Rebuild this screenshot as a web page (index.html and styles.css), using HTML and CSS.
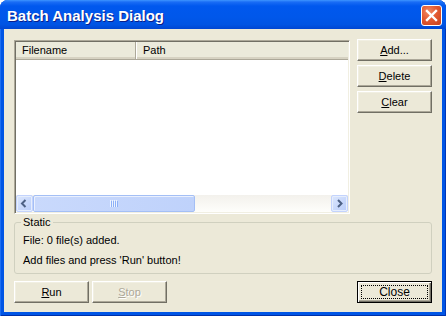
FILE: index.html
```html
<!DOCTYPE html>
<html lang="en">
<head>
  <meta charset="UTF-8" />
  <title>Batch Analysis Dialog</title>
  <link rel="stylesheet" href="styles.css">
</head>
<body>
  <div class="window">
    <div class="titlebar">
      <span class="title">Batch Analysis Dialog</span>
      <span class="close-x">
        <svg width="21" height="21" viewBox="0 0 21 21">
          <path d="M6 6 L15 15 M15 6 L6 15" stroke="#fff" stroke-width="2.4" stroke-linecap="square" />
        </svg>
      </span>
    </div>

    <div class="client">
      <div class="top-row">
        <div class="listview">
          <div class="lv-header">
            <div class="col col-name">Filename</div>
            <div class="col col-path">Path</div>
          </div>
          <div class="lv-body"></div>
          <div class="hscroll">
            <div class="sb-btn">
              <svg width="17" height="17" viewBox="0 0 17 17">
                <path d="M9.5 5 L6 8.5 L9.5 12" fill="none" stroke="#4d6185" stroke-width="2" />
              </svg>
            </div>
            <div class="sb-thumb">
              <svg width="8" height="7" viewBox="0 0 8 7">
                <path d="M0.5 0 V7 M2.5 0 V7 M4.5 0 V7 M6.5 0 V7" stroke="#eef4fe" stroke-width="1" />
                <path d="M1.5 1 V8 M3.5 1 V8 M5.5 1 V8 M7.5 1 V8" stroke="#8cb0f8" stroke-width="1" />
              </svg>
            </div>
            <div class="sb-track"></div>
            <div class="sb-btn">
              <svg width="17" height="17" viewBox="0 0 17 17">
                <path d="M7 5 L10.5 8.5 L7 12" fill="none" stroke="#4d6185" stroke-width="2" />
              </svg>
            </div>
          </div>
        </div>

        <div class="side-buttons">
          <div class="btn"><u>A</u>dd...</div>
          <div class="btn"><u>D</u>elete</div>
          <div class="btn"><u>C</u>lear</div>
        </div>
      </div>

      <fieldset class="group">
        <legend>Static</legend>
        <div class="line first">File: 0 file(s) added.</div>
        <div class="line">Add files and press 'Run' button!</div>
      </fieldset>

      <div class="bottom-row">
        <div class="btn"><u>R</u>un</div>
        <div class="btn disabled"><u>S</u>top</div>
        <div class="spacer"></div>
        <div class="btn default"><span class="focus">Close</span></div>
      </div>
    </div>
  </div>
</body>
</html>
```

FILE: styles.css
```css
* {
  box-sizing: border-box;
}
body {
  margin: 0;
  font-family: "Liberation Sans", Arial, sans-serif;
  font-size: 11px;
  color: #000;
  background: #fff;
}

.window {
  width: 446px;
  height: 316px;
  display: flex;
  flex-direction: column;
  background: #0055e5;
  border-radius: 8px 8px 0 0;
  overflow: hidden;
  box-shadow: inset 1px 0 #1c6ef2, inset -1px 0 #0036b8, inset 0 -1px #0030a8;
}

.titlebar {
  height: 29px;
  flex: none;
  display: flex;
  align-items: center;
  justify-content: space-between;
  padding: 0 4px 0 7px;
  background: linear-gradient(#3d95ff 0, #1a6df5 2px, #0058ee 6px, #0057ea 60%, #0054e3 85%, #0046d2 100%);
}

.title {
  color: #fff;
  font-weight: bold;
  font-size: 15px;
  text-shadow: 1px 1px 0 #0a1e8a;
  margin-top: 1px;
}

.close-x {
  width: 21px;
  height: 21px;
  border: 1px solid #fff;
  border-radius: 3px;
  background: radial-gradient(circle at 35% 30%, #f08a66 0, #e35a32 45%, #c8401c 100%);
  display: flex;
  align-items: center;
  justify-content: center;
  margin-top: 1px;
}
.close-x svg {
  display: block;
  margin: -1px;
}

.client {
  flex: 1;
  margin: 0 4px 4px;
  background: #ece9d8;
  padding: 10px 10px 9px;
  display: flex;
  flex-direction: column;
}

.top-row {
  display: flex;
  gap: 7px;
  height: 175px;
}

.listview {
  width: 336px;
  height: 174px;
  margin-top: 1px;
  background: #fff;
  border: 1px solid;
  border-color: #aca899 #fff #fff #aca899;
  box-shadow: inset 1px 1px #716f64, inset -1px -1px #f1efe2;
  padding: 1px;
  display: flex;
  flex-direction: column;
}

.lv-header {
  height: 18px;
  display: flex;
  background: #ebeadb;
  border-bottom: 1px solid #aca899;
  box-shadow: inset 0 -2px #d6d2c2;
}
.col {
  line-height: 17px;
  padding-left: 6px;
}
.col-name {
  width: 120px;
  border-right: 1px solid #aca899;
  box-shadow: 1px 0 #fff;
}
.col-path {
  flex: 1;
  padding-left: 7px;
}

.lv-body {
  flex: 1;
}

.hscroll {
  height: 17px;
  display: flex;
  background: linear-gradient(#f3f1ec, #fefefb);
}
.sb-btn {
  width: 17px;
  height: 17px;
  border: 1px solid #c3d3fd;
  border-radius: 2px;
  background: linear-gradient(135deg, #dbe6fd, #b9cdfa);
  box-shadow: inset 0 0 0 1px #e6eefc;
}
.sb-btn svg {
  display: block;
  margin: -1px;
}
.sb-thumb {
  width: 162px;
  border: 1px solid #a4bff5;
  border-radius: 2px;
  background: linear-gradient(90deg, #c9d9fc, #bfd2fb);
  box-shadow: inset 1px 1px #eaf0fe;
  display: flex;
  align-items: center;
  justify-content: center;
}
.sb-thumb svg {
  display: block;
}
.sb-track {
  flex: 1;
}

.side-buttons {
  width: 75px;
  display: flex;
  flex-direction: column;
  gap: 4px;
}

.btn {
  width: 75px;
  height: 22px;
  display: flex;
  align-items: center;
  justify-content: center;
  background: #ece9d8;
  border: 1px solid;
  border-color: #fff #716f64 #716f64 #fff;
  box-shadow: inset -1px -1px #aca899, inset 1px 1px #f1efe2;
}
.btn u {
  text-decoration: underline;
  text-underline-offset: 1px;
}
.btn.disabled {
  color: #aca899;
  text-shadow: 1px 1px 0 #fff;
}
.btn.default {
  border: 1px solid #000;
  box-shadow: inset 1px 1px #fff, inset -1px -1px #716f64, inset -2px -2px #aca899;
}
.focus {
  flex: 1;
  align-self: stretch;
  margin: 3px;
  border: 1px dotted #000;
  display: flex;
  align-items: center;
  justify-content: center;
  font-size: 12px;
}

.group {
  margin: 2px 0 0;
  height: 58px;
  padding: 0 8px 3px;
  border: 1px solid #d0d0bf;
  border-radius: 3px;
  min-width: 0;
}
.group legend {
  padding: 0 2px;
  margin-left: -2px;
  line-height: 13px;
}
.line {
  line-height: 20px;
}
.line.first {
  margin-top: 1px;
}

.bottom-row {
  display: flex;
  gap: 3px;
  margin-top: 7px;
}
.spacer {
  flex: 1;
}
```
